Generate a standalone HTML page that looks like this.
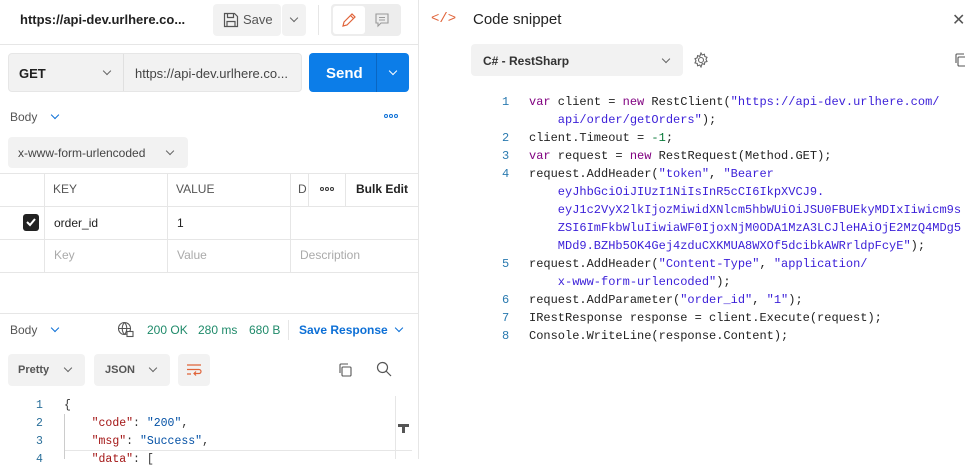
<!DOCTYPE html><html><head><style>
*{box-sizing:border-box;margin:0;padding:0}
body{width:965px;height:459px;overflow:hidden;background:#fff;font-family:"Liberation Sans",sans-serif;font-size:12px;color:#212121;position:relative}
.a{position:absolute}
.mono{font-family:"Liberation Mono",monospace;font-size:12px}
.k{color:#800080}.s{color:#3a1ed8}.n{color:#0a7a3a}.ln{color:#2a7ab0}
.bg{background:#f2f2f2;border-radius:4px}
.chev{display:inline-block;width:6px;height:6px;border-right:1.3px solid #666;border-bottom:1.3px solid #666;transform:rotate(45deg)}
.dots{display:flex;gap:1px}.dots i{display:block;width:4px;height:4px;border:1px solid currentColor;border-radius:50%}
</style></head><body>
<div class="a" style="left:20px;top:12px;font-weight:bold;font-size:13px">https://api-dev.urlhere.co...</div>
<div class="a bg" style="left:213px;top:4px;width:68px;height:32px"></div>
<svg class="a" style="left:223px;top:12px" width="16" height="16" viewBox="0 0 16 16" fill="none" stroke="#555" stroke-width="1.2"><path d="M1.5 1.5h10l3 3v10h-13z M4.5 1.5v4h6v-4 M4 14.5v-5h8v5"/></svg>
<div class="a" style="left:243px;top:12px;font-size:13px;color:#555">Save</div>
<div class="a bg" style="left:282px;top:4px;width:24px;height:32px"></div>
<span class="a chev" style="left:291px;top:15px"></span>
<div class="a" style="left:318px;top:5px;width:1px;height:30px;background:#e6e6e6"></div>
<div class="a" style="left:331px;top:4px;width:70px;height:32px;background:#ededed;border-radius:4px"></div>
<div class="a" style="left:333px;top:6px;width:32px;height:28px;background:#fff;border-radius:3px"></div>
<svg class="a" style="left:341px;top:12px" width="16" height="16" viewBox="0 0 16 16" fill="none" stroke="#e0643a" stroke-width="1.2"><path d="M2 14l1-4 8-8 3 3-8 8z M9.5 3.5l3 3"/></svg>
<svg class="a" style="left:374px;top:12px" width="16" height="16" viewBox="0 0 16 16" fill="none" stroke="#999" stroke-width="1.1"><path d="M2 2h12v9H7l-3 3v-3H2z M5 5.5h6 M5 8h6"/></svg>
<div class="a" style="left:0;top:44px;width:418px;height:1px;background:#e6e6e6"></div>
<div class="a bg" style="left:8px;top:53px;width:294px;height:39px;border:1px solid #e6e6e6"></div>
<div class="a" style="left:123px;top:54px;width:1px;height:37px;background:#e0e0e0"></div>
<div class="a" style="left:19px;top:66px;font-weight:bold;font-size:13px">GET</div>
<span class="a chev" style="left:104px;top:68px"></span>
<div class="a" style="left:135px;top:66px;font-size:13px;color:#444">https://api-dev.urlhere.co...</div>
<div class="a" style="left:309px;top:53px;width:100px;height:39px;background:#0c7de8;border-radius:4px"></div>
<div class="a" style="left:376px;top:53px;width:1px;height:39px;background:#0a66c2"></div>
<div class="a" style="left:326px;top:65px;font-weight:bold;font-size:15px;color:#fff">Send</div>
<span class="a chev" style="left:390px;top:68px;border-color:#fff"></span>
<div class="a" style="left:10px;top:110px;color:#555">Body</div>
<span class="a chev" style="left:52px;top:112px;border-color:#0c6fd6"></span>
<div class="a dots" style="left:384px;top:114px;color:#0c6fd6"><i></i><i></i><i></i></div>
<div class="a bg" style="left:8px;top:137px;width:180px;height:31px"></div>
<div class="a" style="left:18px;top:146px;color:#444">x-www-form-urlencoded</div>
<span class="a chev" style="left:167px;top:148px"></span>
<div class="a" style="left:0;top:173px;width:418px;height:1px;background:#e6e6e6"></div>
<div class="a" style="left:0;top:206px;width:418px;height:1px;background:#e6e6e6"></div>
<div class="a" style="left:0;top:239px;width:418px;height:1px;background:#e6e6e6"></div>
<div class="a" style="left:0;top:272px;width:418px;height:1px;background:#e6e6e6"></div>
<div class="a" style="left:44px;top:173px;width:1px;height:99px;background:#e6e6e6"></div>
<div class="a" style="left:167px;top:173px;width:1px;height:99px;background:#e6e6e6"></div>
<div class="a" style="left:290px;top:173px;width:1px;height:99px;background:#e6e6e6"></div>
<div class="a" style="left:308px;top:173px;width:1px;height:33px;background:#e6e6e6"></div>
<div class="a" style="left:345px;top:173px;width:1px;height:33px;background:#e6e6e6"></div>
<div class="a" style="left:53px;top:182px;color:#555">KEY</div>
<div class="a" style="left:176px;top:182px;color:#555">VALUE</div>
<div class="a" style="left:298px;top:182px;color:#555">D</div>
<div class="a dots" style="left:320px;top:187px;color:#333"><i></i><i></i><i></i></div>
<div class="a" style="left:356px;top:182px;font-weight:bold">Bulk Edit</div>
<div class="a" style="left:23px;top:214px;width:16px;height:17px;background:#222;border-radius:3px"></div>
<svg class="a" style="left:25px;top:216px" width="12" height="12" viewBox="0 0 12 12"><path d="M2 6l3 3 5-6" stroke="#fff" stroke-width="2" fill="none"/></svg>
<div class="a" style="left:54px;top:216px">order_id</div>
<div class="a" style="left:177px;top:216px">1</div>
<div class="a" style="left:54px;top:248px;color:#aaa">Key</div>
<div class="a" style="left:177px;top:248px;color:#aaa">Value</div>
<div class="a" style="left:300px;top:248px;color:#aaa">Description</div>
<div class="a" style="left:0;top:313px;width:418px;height:1px;background:#e6e6e6"></div>
<div class="a" style="left:10px;top:323px;color:#555">Body</div>
<span class="a chev" style="left:52px;top:325px;border-color:#0c6fd6"></span>
<svg class="a" style="left:117px;top:321px" width="17" height="17" viewBox="0 0 17 17" fill="none" stroke="#555" stroke-width="1.1"><circle cx="7.5" cy="7.5" r="6"/><path d="M1.5 7.5h12 M7.5 1.5c-3 3-3 9 0 12 M7.5 1.5c3 3 3 9 0 12"/><rect x="10" y="10.5" width="6" height="5" fill="#fff"/></svg>
<div class="a" style="left:147px;top:323px;color:#1f8a6a">200 OK</div>
<div class="a" style="left:198px;top:323px;color:#1f8a6a">280 ms</div>
<div class="a" style="left:249px;top:323px;color:#1f8a6a">680 B</div>
<div class="a" style="left:288px;top:320px;width:1px;height:20px;background:#e6e6e6"></div>
<div class="a" style="left:299px;top:323px;color:#0c6fd6;font-weight:bold">Save Response</div>
<span class="a chev" style="left:396px;top:325px;border-color:#0c6fd6"></span>
<div class="a bg" style="left:8px;top:354px;width:77px;height:32px"></div>
<div class="a" style="left:18px;top:364px;color:#555;font-weight:bold;font-size:11px">Pretty</div>
<span class="a chev" style="left:65px;top:365px"></span>
<div class="a bg" style="left:94px;top:354px;width:76px;height:32px"></div>
<div class="a" style="left:105px;top:364px;color:#555;font-weight:bold;font-size:11px">JSON</div>
<span class="a chev" style="left:150px;top:365px"></span>
<div class="a bg" style="left:178px;top:354px;width:32px;height:32px"></div>
<svg class="a" style="left:186px;top:362px" width="16" height="16" viewBox="0 0 16 16" fill="none" stroke="#e0643a" stroke-width="1.2"><path d="M1 3h14 M1 7.5h12a2 2 0 010 4H8 M10 9.5l-2 2 2 2 M1 12h4"/></svg>
<svg class="a" style="left:337px;top:362px" width="16" height="16" viewBox="0 0 16 16" fill="none" stroke="#555" stroke-width="1.1"><rect x="5" y="5" width="9" height="9" rx="1"/><path d="M3 11V3a1 1 0 011-1h7"/></svg>
<svg class="a" style="left:376px;top:361px" width="16" height="16" viewBox="0 0 16 16" fill="none" stroke="#555" stroke-width="1.2"><circle cx="6.5" cy="6.5" r="5"/><path d="M10 10l5 5"/></svg>
<div class="a" style="left:395px;top:396px;width:1px;height:63px;background:#e6e6e6"></div>
<div class="a" style="left:398px;top:424px;width:11px;height:3px;background:#555"></div>
<div class="a" style="left:402px;top:424px;width:3px;height:9px;background:#555"></div>
<div class="a" style="left:64px;top:450px;width:348px;height:1px;background:#e6e6e6"></div>
<div class="a" style="left:64px;top:414px;width:1px;height:45px;background:#ccc"></div>
<div class="a mono" style="left:30px;top:397px;line-height:18px;font-size:11.5px"><div style="position:absolute;left:6px;color:#2a6f9a">1<br>2<br>3<br>4</div>
<div style="position:absolute;left:34px;white-space:pre;color:#333">{
    <span style="color:#a31515">"code"</span>: <span style="color:#0451a5">"200"</span>,
    <span style="color:#a31515">"msg"</span>: <span style="color:#0451a5">"Success"</span>,
    <span style="color:#a31515">"data"</span>: [</div></div>
<div class="a" style="left:418px;top:0;width:1px;height:459px;background:#e6e6e6"></div>
<div class="a" style="left:431px;top:11px;color:#e0643a;font-size:14px;font-family:'Liberation Mono',monospace">&lt;/&gt;</div>
<div class="a" style="left:473px;top:11px;font-size:15px;color:#222">Code snippet</div>
<div class="a" style="left:952px;top:10px;font-size:16px;color:#555">✕</div>
<div class="a bg" style="left:471px;top:44px;width:212px;height:32px"></div>
<div class="a" style="left:483px;top:54px;font-size:12px;font-weight:bold;color:#333">C# - RestSharp</div>
<span class="a chev" style="left:663px;top:56px"></span>
<svg class="a" style="left:693px;top:52px" width="16" height="16" viewBox="0 0 16 16" fill="none" stroke="#666" stroke-width="1.1"><circle cx="8" cy="8" r="2.5"/><path d="M8 1l1.2 2 2.2-.8.4 2.3 2.2.8-1 2 1 2.2-2.2.6-.4 2.3-2.2-.8L8 15l-1.2-2-2.2.8-.4-2.3-2.2-.6 1-2.2-1-2 2.2-.8.4-2.3 2.2.8z"/></svg>
<svg class="a" style="left:953px;top:52px" width="12" height="16" viewBox="0 0 12 16" fill="none" stroke="#555" stroke-width="1.1"><rect x="5" y="5" width="9" height="9" rx="1"/><path d="M3 11V3a1 1 0 011-1h7"/></svg>
<div class="a mono" style="left:500px;top:93px;line-height:18px;white-space:pre;color:#222">
<div class="ln" style="position:absolute;left:2px;top:0">1</div>
<div class="ln" style="position:absolute;left:2px;top:36px">2</div>
<div class="ln" style="position:absolute;left:2px;top:54px">3</div>
<div class="ln" style="position:absolute;left:2px;top:72px">4</div>
<div class="ln" style="position:absolute;left:2px;top:162px">5</div>
<div class="ln" style="position:absolute;left:2px;top:198px">6</div>
<div class="ln" style="position:absolute;left:2px;top:216px">7</div>
<div class="ln" style="position:absolute;left:2px;top:234px">8</div>
<div style="position:absolute;left:29px;top:0"><span class="k">var</span> client = <span class="k">new</span> RestClient(<span class="s">"https://api-dev.urlhere.com/</span>
<span class="s">    api/order/getOrders"</span>);
client.Timeout = <span class="n">-1</span>;
<span class="k">var</span> request = <span class="k">new</span> RestRequest(Method.GET);
request.AddHeader(<span class="s">"token"</span>, <span class="s">"Bearer</span>
<span class="s">    eyJhbGciOiJIUzI1NiIsInR5cCI6IkpXVCJ9.</span>
<span class="s">    eyJ1c2VyX2lkIjozMiwidXNlcm5hbWUiOiJSU0FBUEkyMDIxIiwicm9s</span>
<span class="s">    ZSI6ImFkbWluIiwiaWF0IjoxNjM0ODA1MzA3LCJleHAiOjE2MzQ4MDg5</span>
<span class="s">    MDd9.BZHb5OK4Gej4zduCXKMUA8WXOf5dcibkAWRrldpFcyE"</span>);
request.AddHeader(<span class="s">"Content-Type"</span>, <span class="s">"application/</span>
<span class="s">    x-www-form-urlencoded"</span>);
request.AddParameter(<span class="s">"order_id"</span>, <span class="s">"1"</span>);
IRestResponse response = client.Execute(request);
Console.WriteLine(response.Content);</div></div>
</body></html>
